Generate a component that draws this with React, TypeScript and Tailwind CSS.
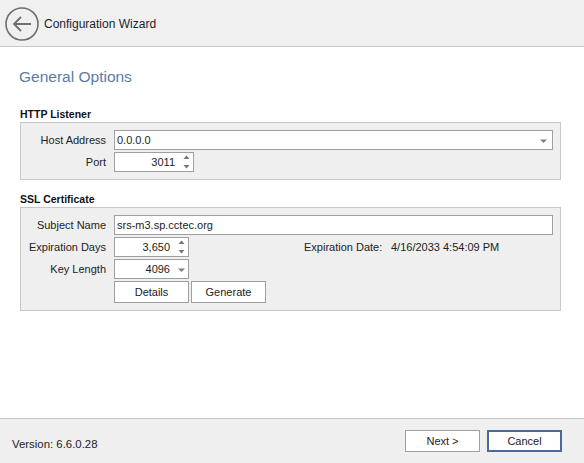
import React from "react";

const Spin = () => (
  <svg width="9" height="18" viewBox="0 0 9 18" className="shrink-0 -mt-px">
    <path d="M4.5 2.5 L7.5 6 L1.5 6 Z" fill="#777" />
    <path d="M1.5 12 L7.5 12 L4.5 15.5 Z" fill="#777" />
  </svg>
);
const Caret = () => (
  <svg width="9" height="6" viewBox="0 0 9 6" className="shrink-0">
    <path d="M1 1.5 L8 1.5 L4.5 5 Z" fill="#808080" />
  </svg>
);
const Field = ({ className = "", children }: { className?: string; children: React.ReactNode }) => (
  <div className={`h-5 pt-px flex items-center border border-[#a0a0a0] bg-white ${className}`}>{children}</div>
);
const Label = ({ children }: { children: React.ReactNode }) => (
  <div className="w-[85px] pt-px shrink-0 text-right whitespace-nowrap">{children}</div>
);
const Row = ({ label, children }: { label?: string; children: React.ReactNode }) => (
  <div className="flex items-center gap-2">
    <Label>{label}</Label>
    {children}
  </div>
);
const Btn = ({ className = "", children }: { className?: string; children: React.ReactNode }) => (
  <div className={`w-[75px] flex items-center justify-center bg-white ${className}`}>{children}</div>
);

export default function App() {
  return (
    <div className="w-[584px] h-[463px] flex flex-col bg-white text-[#222] text-[11px] font-['Liberation_Sans',sans-serif] overflow-hidden">
      <div className="h-[47px] shrink-0 flex items-center gap-[5px] pl-[5px] pt-[2px] bg-[#f0f0f0] border-b border-[#c8c8c8]">
        <svg width="34" height="34" viewBox="0 0 34 34" className="shrink-0">
          <circle cx="17" cy="17" r="16" fill="none" stroke="#6e6e6e" strokeWidth="1.6" />
          <path d="M26 17 H9 M16 10 L9 17 L16 24" fill="none" stroke="#6e6e6e" strokeWidth="1.8" />
        </svg>
        <span className="text-[12px] text-[#1e1e2a]">Configuration Wizard</span>
      </div>

      <div className="flex-1 px-5 min-h-0">
        <div className="mt-[19px] -ml-px text-[15.5px] leading-[22px] text-[#5b7ba6]">General Options</div>
        <div className="mt-[17px] font-bold text-[10.5px] leading-[16px] text-[#111] relative top-px">HTTP Listener</div>
        <div className="w-[541px] h-[58px] mt-[1px] pt-[7px] flex flex-col gap-[2px] bg-[#efefef] border border-[#c8c8c8]">
          <Row label="Host Address">
            <Field className="w-[439px] pl-[2px] pr-[4px] justify-between">
              <span>0.0.0.0</span>
              <Caret />
            </Field>
          </Row>
          <Row label="Port">
            <Field className="w-[80px] pr-[2px] justify-end gap-[7px]">
              <span>3011</span>
              <Spin />
            </Field>
          </Row>
        </div>

        <div className="mt-[10px] font-bold text-[10.5px] leading-[16px] text-[#111] relative top-px">SSL Certificate</div>
        <div className="w-[541px] h-[104px] mt-[1px] pt-[7px] flex flex-col gap-[2px] bg-[#efefef] border border-[#c8c8c8]">
          <Row label="Subject Name">
            <Field className="w-[439px] pl-[2px]">srs-m3.sp.cctec.org</Field>
          </Row>
          <Row label="Expiration Days">
            <Field className="w-[75px] pr-[2px] justify-end gap-[7px]">
              <span>3,650</span>
              <Spin />
            </Field>
            <span className="ml-[107px] pt-px whitespace-nowrap w-[79px]">Expiration Date:</span>
            <span className="pt-px whitespace-nowrap">4/16/2033 4:54:09 PM</span>
          </Row>
          <Row label="Key Length">
            <Field className="w-[75px] pr-[2px] justify-end gap-[7px]">
              <span>4096</span>
              <Caret />
            </Field>
          </Row>
          <Row>
            <div className="flex gap-[2px]">
              <Btn className="h-[22px] border border-[#a0a0a0]">Details</Btn>
              <Btn className="h-[22px] border border-[#a0a0a0]">Generate</Btn>
            </div>
          </Row>
        </div>
      </div>

      <div className="h-[45px] shrink-0 flex items-start justify-between pl-3 pr-[22px] pt-[11px] bg-[#efefef] border-t border-[#c8c8c8]">
        <span className="mt-[6px] text-[11.4px]">Version: 6.6.0.28</span>
        <div className="flex gap-[7px]">
          <Btn className="h-[22px] pt-px border border-[#a0a0a0]">Next &gt;</Btn>
          <Btn className="h-[22px] pt-px border-2 border-[#4a6a9e]">Cancel</Btn>
        </div>
      </div>
    </div>
  );
}
